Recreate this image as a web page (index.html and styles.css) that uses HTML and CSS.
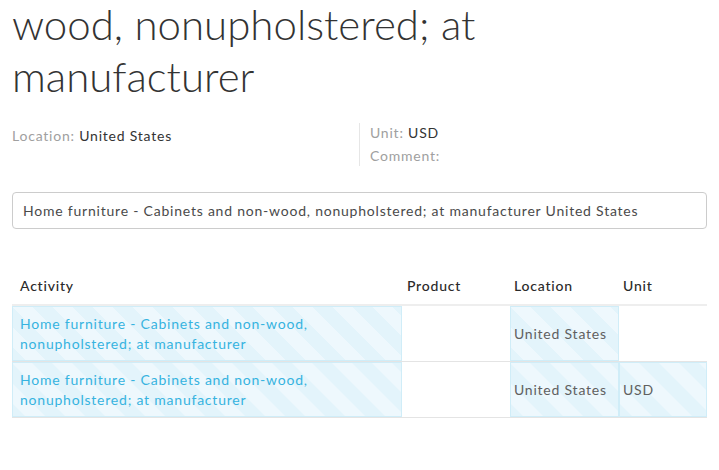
FILE: index.html
```html
<!DOCTYPE html>
<html>
<head>
<meta charset="utf-8">
<link rel="stylesheet" href="styles.css">
</head>
<body>
<div class="page">
  <h1 class="title">wood, nonupholstered; at<br>manufacturer</h1>
  <div class="meta">
    <div class="meta-col meta-left">
      <div class="meta-line"><span class="label">Location:</span> <span class="value">United States</span></div>
    </div>
    <div class="meta-col meta-right">
      <div class="meta-line"><span class="label">Unit:</span> <span class="value">USD</span></div>
      <div class="meta-line"><span class="label">Comment:</span></div>
    </div>
  </div>
  <div class="search">Home furniture - Cabinets and non-wood, nonupholstered; at manufacturer United States</div>
  <table class="results">
    <thead>
      <tr>
        <th class="c-act">Activity</th>
        <th class="c-prod">Product</th>
        <th class="c-loc">Location</th>
        <th class="c-unit">Unit</th>
      </tr>
    </thead>
    <tbody>
      <tr>
        <td class="c-act hl"><a href="#">Home furniture - Cabinets and non-wood, nonupholstered; at manufacturer</a></td>
        <td class="c-prod"></td>
        <td class="c-loc hl">United States</td>
        <td class="c-unit"></td>
      </tr>
      <tr>
        <td class="c-act hl"><a href="#">Home furniture - Cabinets and non-wood, nonupholstered; at manufacturer</a></td>
        <td class="c-prod"></td>
        <td class="c-loc hl">United States</td>
        <td class="c-unit hl">USD</td>
      </tr>
    </tbody>
  </table>
</div>
</body>
</html>
```
FILE: styles.css
```css
html, body {
  margin: 0;
  padding: 0;
  background: #fff;
}
body {
  font-family: "Lato", "Open Sans", sans-serif;
  font-size: 14px;
  line-height: 20px;
  letter-spacing: 0.78px;
  color: #333;
}
.page {
  padding: 0 12px;
}
.title {
  margin: -2px 0 0 0;
  font-family: "Lato", sans-serif;
  font-size: 42px;
  line-height: 52px;
  font-weight: 300;
  letter-spacing: 0;
  color: #333;
}
.meta {
  display: flex;
  margin-top: 21px;
}
.meta-left {
  width: 347px;
  padding-top: 3px;
}
.meta-right {
  border-left: 1px solid #e6e6e6;
  padding-left: 10px;
}
.meta-line {
  line-height: 20px;
  margin-bottom: 3px;
}
.meta-right .meta-line:last-child {
  margin-bottom: 0;
}
.label {
  color: #a0a0a0;
}
.value {
  color: #333;
}
.search {
  margin-top: 26px;
  height: 37px;
  box-sizing: border-box;
  border: 1px solid #ccc;
  border-radius: 4px;
  padding: 8px 10px;
  line-height: 20px;
  color: #4a4a4a;
}
.results {
  margin-top: 39px;
  width: 100%;
  border-collapse: collapse;
  border-spacing: 0;
  table-layout: fixed;
}
.results th {
  text-align: left;
  font-weight: 500;
  padding: 8px 4px;
  line-height: 20px;
  border-bottom: 2px solid #eee;
  color: #2a2a2a;
}
.results td {
  padding: 8px 4px 7px;
  line-height: 20px;
  border-top: 1px solid #e4e4e4;
  vertical-align: middle;
  color: #606060;
}
.results .c-act { width: 374px; padding-left: 8px; padding-right: 8px; }
.results .c-prod { width: 100px; padding-left: 5px; padding-right: 3px; }
.results .c-loc { width: 101px; }
.results .c-unit { width: 80px; }
.results tbody tr:last-child td {
  border-bottom: 1px solid #e4e4e4;
}
.results td.hl {
  background-color: #e3f4fb;
  background-image: linear-gradient(45deg, rgba(255,255,255,.4) 25%, transparent 25%, transparent 50%, rgba(255,255,255,.4) 50%, rgba(255,255,255,.4) 75%, transparent 75%, transparent);
  background-size: 40px 40px;
  box-shadow: inset 0 0 0 1px #d0edf8;
}
.results a {
  color: #36b3e0;
  text-decoration: none;
}
```
